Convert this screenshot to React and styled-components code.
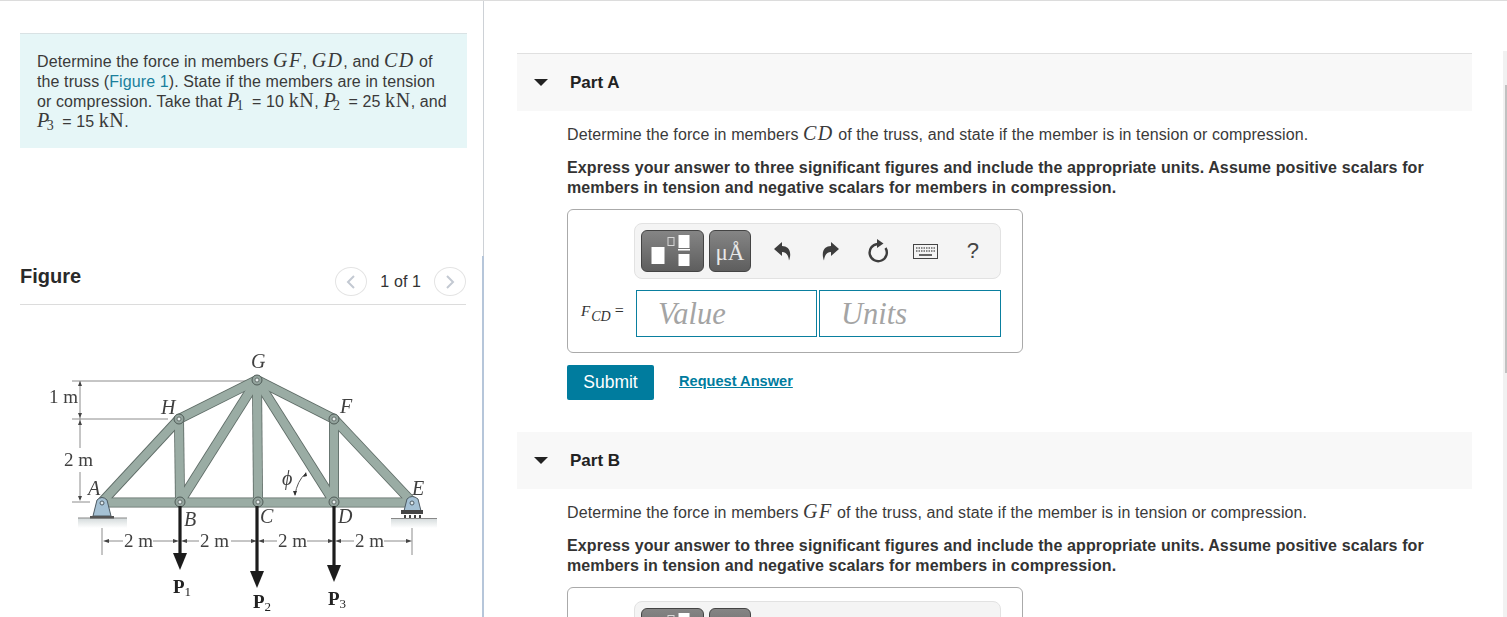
import React from "react";
import styled, { createGlobalStyle } from "styled-components";

const Global = createGlobalStyle`
  html, body { margin: 0; padding: 0; height: 100%; overflow: hidden; background: #fff; }
  body { font-family: "Liberation Sans", Arial, sans-serif; color: #333; }
  #root { height: 100%; }
`;

const Page = styled.div`
  display: flex;
  height: 617px;
  overflow: hidden;
  border-top: 1px solid #dcdcdc;
  box-sizing: border-box;
  position: relative;
`;
const LeftPanel = styled.aside`
  width: 484px;
  flex: none;
  box-sizing: border-box;
  padding: 32px 16px 0 20px;
  border-right: 1px solid #cdd1d6;
  overflow: hidden;
`;
const Intro = styled.div`
  background: #e6f6f7;
  border-top: 1px solid #d9e2e4;
  padding: 18px 17px 0;
  height: 115px;
  box-sizing: border-box;
  font-size: 16px;
  line-height: 20px;
  letter-spacing: 0.1px;
  color: #3a3a3a;
`;
const TextLink = styled.a`
  color: #1a7f9c;
`;
const MathVar = styled.span`
  font-family: "Liberation Serif", serif;
  font-style: italic;
  font-size: 20px;
  line-height: 0;
  letter-spacing: 1.4px;
`;
const MathRoman = styled.span`
  font-family: "Liberation Serif", serif;
  font-size: 20px;
  line-height: 0;
  letter-spacing: 0.6px;
`;
const MathSub = styled.sub`
  font-family: "Liberation Serif", serif;
  font-style: normal;
  font-size: 14px;
  line-height: 0;
  letter-spacing: 0;
  margin-left: -4px;
  margin-right: 4px;
  vertical-align: -3px;
`;
const FigureHead = styled.div`
  display: flex;
  align-items: center;
  justify-content: space-between;
  margin: 109px 1px 0 0;
  height: 48px;
  box-sizing: border-box;
  border-bottom: 1px solid #dcdcdc;
  padding-bottom: 8px;
`;
const FigureTitle = styled.h2`
  margin: 0;
  font-size: 20px;
  font-weight: bold;
  color: #2a2a2a;
`;
const Pager = styled.div`
  display: flex;
  align-items: center;
  gap: 13px;
  margin-top: 10px;
  font-size: 16px;
  letter-spacing: 0.1px;
  color: #333;
`;
const PagerBtn = styled.span`
  width: 32px;
  height: 29px;
  border: 1px solid #e4e4e4;
  border-radius: 50%;
  box-sizing: border-box;
  display: flex;
  align-items: center;
  justify-content: center;
`;
const TrussSvg = styled.svg`
  display: block;
  width: 447px;
  height: 277px;
  margin-top: 35px;
`;
const RightPanel = styled.main`
  flex: 1;
  box-sizing: border-box;
  padding: 52px 35px 0 33px;
  overflow: hidden;
`;
const PartHeader = styled.div`
  display: flex;
  align-items: center;
  height: ${(p) => (p.$first ? "58px" : "57px")};
  box-sizing: border-box;
  background: #f8f8f8;
  border-top: ${(p) => (p.$first ? "1px solid #e0e0e0" : "none")};
  padding-left: 17px;
`;
const Caret = styled.span`
  width: 0;
  height: 0;
  border-left: 7px solid transparent;
  border-right: 7px solid transparent;
  border-top: 7px solid #222;
  margin-right: 22px;
`;
const PartTitle = styled.h3`
  margin: 0;
  font-size: 17px;
  font-weight: bold;
  color: #222;
`;
const PartBody = styled.section`
  padding: 14px 0 32px 50px;
`;
const Prompt = styled.p`
  margin: 0;
  font-size: 16px;
  line-height: 20px;
  letter-spacing: 0.1px;
  color: #3a3a3a;
`;
const Instruction = styled.p`
  margin: 13px 0 0;
  font-size: 16px;
  line-height: 20px;
  font-weight: bold;
  color: #333;
  letter-spacing: 0.115px;
  max-width: 880px;
`;
const AnswerBox = styled.div`
  margin-top: 11px;
  width: 456px;
  height: 144px;
  box-sizing: border-box;
  border: 1px solid #aaa;
  border-radius: 6px;
  padding: 13px 21px 0 13px;
`;
const Toolbar = styled.div`
  margin-left: 53px;
  height: 56px;
  box-sizing: border-box;
  background: #f4f4f4;
  border: 1px solid #e2e2e2;
  border-radius: 8px;
  display: flex;
  align-items: center;
  padding-left: 6px;
`;
const ToolBtn = styled.button`
  width: ${(p) => p.$w}px;
  height: 42px;
  margin-right: 5px;
  padding: ${(p) => (p.$text ? "4px 0 0" : "0")};
  border: 1px solid #444;
  border-radius: 6px;
  background: linear-gradient(#858585, #5e5e5e);
  color: #e8e8e8;
  font-family: "Liberation Serif", serif;
  font-size: 23px;
  display: flex;
  align-items: center;
  justify-content: center;
  flex: none;
`;
const ToolIcons = styled.div`
  display: flex;
  align-items: center;
  flex: 1;
  padding-left: 3px;
`;
const ToolIcon = styled.span`
  width: 47.5px;
  display: flex;
  justify-content: center;
  align-items: center;
  flex: none;
  font-size: 22px;
  color: #444;
`;
const InputRow = styled.div`
  display: flex;
  align-items: center;
  margin-top: 11px;
`;
const VarLabel = styled.div`
  width: 55px;
  flex: none;
  font-family: "Liberation Serif", serif;
  font-size: 16px;
  color: #333;
  white-space: nowrap;
  position: relative;
  top: -3px;
`;
const LabelVar = styled.i`
  font-size: 15px;
`;
const LabelSub = styled.sub`
  font-style: italic;
  font-size: 14px;
  line-height: 0;
  vertical-align: -5px;
  margin-left: 1px;
  margin-right: 0;
`;
const FieldBox = styled.div`
  width: ${(p) => p.$w}px;
  height: 47px;
  box-sizing: border-box;
  border: 1px solid #0a7f9f;
  margin-right: 2px;
  padding-left: 21px;
  font-family: "Liberation Serif", serif;
  font-style: italic;
  font-size: 30.5px;
  line-height: 46px;
  color: #a4a4a4;
  flex: none;
`;
const Actions = styled.div`
  display: flex;
  align-items: center;
  margin-top: 12px;
`;
const SubmitBtn = styled.button`
  width: 87px;
  height: 35px;
  background: #007c9e;
  color: #fff;
  border: none;
  border-radius: 2px;
  font-family: "Liberation Sans", Arial, sans-serif;
  font-size: 17.5px;
  padding: 0;
`;
const RequestLink = styled.a`
  margin-left: 25px;
  font-size: 14.6px;
  font-weight: bold;
  color: #007c9e;
  text-decoration: underline;
  position: relative;
  top: -2px;
`;
const ScrollTrack = styled.div`
  position: absolute;
  top: 50px;
  right: 0;
  bottom: 0;
  width: 4px;
  background: #f1f1f1;
`;
const ScrollThumb = styled.div`
  position: absolute;
  top: 34px;
  right: 0;
  height: 288px;
  width: 2px;
  background: #c1c1c1;
`;
const PanelEdge = styled.div`
  position: absolute;
  left: 482px;
  top: 255px;
  bottom: 0;
  width: 2px;
  background: #b6c6da;
`;

const Undo = () => (
  <svg width="18" height="19" viewBox="0 0 18 19">
    <path d="M0 7 L8 0 V4 C14 4 18.5 9 15 18.5 C14.5 13 12 10 8 10 V14 Z" fill="#3d3d3d" />
  </svg>
);
const Redo = () => (
  <svg width="18" height="19" viewBox="0 0 18 19">
    <path d="M18 7 L10 0 V4 C4 4 -0.5 9 3 18.5 C3.5 13 6 10 10 10 V14 Z" fill="#3d3d3d" />
  </svg>
);
const Reset = () => (
  <svg width="22" height="24" viewBox="0 0 22 24">
    <path d="M10.5 5 A8.6 8.6 0 1 0 18.5 9" fill="none" stroke="#3d3d3d" strokeWidth="2.4" />
    <path d="M10 0 L16.5 4.5 L10 9 Z" fill="#3d3d3d" />
  </svg>
);
const Keyboard = () => (
  <svg width="25" height="15" viewBox="0 0 25 15">
    <rect x="0.5" y="0.5" width="24" height="14" fill="#f4f4f4" stroke="#444" />
    <path d="M3 4h19M3 7h19" stroke="#666" strokeWidth="1.6" strokeDasharray="1.5 1" fill="none" />
    <path d="M6 11h13" stroke="#666" strokeWidth="2" fill="none" />
  </svg>
);
const TemplateGlyph = () => (
  <svg width="46" height="34" viewBox="0 0 46 34">
    <rect x="1.5" y="13" width="13" height="17" fill="#fff" />
    <rect x="18" y="3.5" width="6" height="8" fill="none" stroke="#d8d8d8" />
    <rect x="28.5" y="1" width="11" height="13" fill="#fff" />
    <rect x="28" y="15" width="12" height="1.5" fill="#fff" />
    <rect x="28.5" y="20" width="11" height="12" fill="#fff" />
  </svg>
);
const ToolBar = () => (
  <Toolbar>
    <ToolBtn $w={63}><TemplateGlyph /></ToolBtn>
    <ToolBtn $w={42} $text>μÅ</ToolBtn>
    <ToolIcons>
      <ToolIcon><Undo /></ToolIcon>
      <ToolIcon><Redo /></ToolIcon>
      <ToolIcon><Reset /></ToolIcon>
      <ToolIcon><Keyboard /></ToolIcon>
      <ToolIcon>?</ToolIcon>
    </ToolIcons>
  </Toolbar>
);

const members = [
  [102, 502, 179, 419],
  [179, 419, 257, 380],
  [257, 380, 334, 419],
  [334, 419, 412, 502],
  [180, 502, 257, 380],
  [257, 380, 334, 502],
  [179, 419, 180, 502],
  [257, 380, 258, 502],
  [334, 419, 334, 502],
  [102, 502.5, 412, 502.5],
];
const joints = [
  [179, 419],
  [257, 380],
  [334, 419],
  [180, 502],
  [258, 502],
  [334, 502],
];
const labels = [
  ["H", 161, 414],
  ["A", 88, 495],
  ["B", 184, 526],
  ["G", 251, 368],
  ["F", 340, 413],
  ["E", 412, 495],
  ["C", 260, 523],
  ["D", 338, 523],
];
const dims = [
  [124, 547],
  [200, 547],
  [278, 547],
  [355, 547],
];
const dimLines = [
  [72, 381, 252, 381],
  [72, 419, 168, 419],
  [72, 502, 90, 502],
  [80, 381, 80, 410],
  [80, 410, 80, 448],
  [80, 472, 80, 499],
  [102, 512, 102, 555],
  [412, 525, 412, 555],
  [106, 541, 123, 541],
  [153, 541, 176, 541],
  [184, 541, 199, 541],
  [231, 541, 254, 541],
  [261, 541, 277, 541],
  [307, 541, 331, 541],
  [338, 541, 354, 541],
  [384, 541, 409, 541],
];
const loads = [
  [180, 570, "1", 173, 593],
  [257, 588, "2", 253, 608],
  [334, 582, "3", 328, 605],
];

const Truss = () => (
  <TrussSvg viewBox="20 340 447 277">
    <defs>
      <linearGradient id="ground" x1="0" y1="0" x2="0" y2="1">
        <stop offset="0" stopColor="#d3dadb" />
        <stop offset="1" stopColor="#ffffff" />
      </linearGradient>
      <filter id="soft"><feGaussianBlur stdDeviation="0.45" /></filter>
      <filter id="softText"><feGaussianBlur stdDeviation="0.25" /></filter>
    </defs>
    <g filter="url(#soft)">
      {dimLines.map(([a, b, c, d], i) => (
        <line key={i} x1={a} y1={b} x2={c} y2={d} stroke="#8c8c8c" strokeWidth="1" />
      ))}
      {members.map(([a, b, c, d], i) => (
        <line key={i} x1={a} y1={b} x2={c} y2={d} stroke="#5c6964" strokeWidth="10" />
      ))}
      {members.map(([a, b, c, d], i) => (
        <line key={i} x1={a} y1={b} x2={c} y2={d} stroke="#9aaca4" strokeWidth="8.4" />
      ))}
      {joints.map(([x, y], i) => (
        <g key={i}>
          <circle cx={x} cy={y} r="5" fill="#93a39d" stroke="#4f5b57" />
          <circle cx={x} cy={y} r="2" fill="#e8eeee" stroke="#55605c" strokeWidth="0.8" />
        </g>
      ))}
      <rect x="78" y="518" width="49" height="10" fill="url(#ground)" />
      <rect x="78" y="517.5" width="49" height="1" fill="#888" />
      <path d="M93 516 L97 500 Q102 495 107 500 L111 516 Z" fill="#a5c1d4" stroke="#4d5a62" />
      <circle cx="102" cy="503" r="2" fill="#dfe8ec" stroke="#4d5a62" />
      <rect x="90" y="516" width="24" height="2.5" fill="#555" />
      <rect x="391" y="518" width="46" height="10" fill="url(#ground)" />
      <rect x="391" y="518" width="46" height="1" fill="#888" />
      <path d="M404 511 L407 499 Q412 494 418 499 L421 511 Z" fill="#a5c1d4" stroke="#4d5a62" />
      <circle cx="412" cy="503" r="2" fill="#dfe8ec" stroke="#4d5a62" />
      <rect x="401" y="510" width="22" height="4" fill="#444" />
      <path d="M404 515h2v3h-2zM409 515h2v3h-2zM414 515h2v3h-2zM419 515h2v3h-2z" fill="#444" />
      <path d="M295 495 Q297 481 306 473" fill="none" stroke="#555" />
      <path d="M306 472 L303 477 L307 476 Z M295 496 L293 491 L297 491 Z" fill="#333" />
      {[[106, 541, 1], [176, 541, -1], [184, 541, 1], [254, 541, -1], [261, 541, 1], [331, 541, -1], [338, 541, 1], [409, 541, -1]].map(
        ([x, y, s], i) => (
          <path key={i} d={`M${x - 3 * s} ${y} L${x + 3 * s} ${y - 2} L${x + 3 * s} ${y + 2} Z`} fill="#444" />
        )
      )}
      <path d="M80 381 l-2 5 h4 Z M80 418 l-2 -5 h4 Z M80 420 l-2 5 h4 Z M80 501 l-2 -5 h4 Z" fill="#444" />
      {loads.map(([x, tip], i) => (
        <g key={i}>
          <line x1={x} y1="506" x2={x} y2={tip - 14} stroke="#1c1c1c" strokeWidth="3.2" />
          <path d={`M${x - 7} ${tip - 17} L${x + 7} ${tip - 17} L${x} ${tip} Z`} fill="#1c1c1c" />
        </g>
      ))}
    </g>
    <g fontFamily="Liberation Serif, serif" fill="#3f3f3f" filter="url(#softText)">
      <text x="49" y="403" fontSize="19">1 m</text>
      <text x="64" y="466" fontSize="19">2 m</text>
      {dims.map(([x, y], i) => (
        <text key={i} x={x} y={y} fontSize="19">2 m</text>
      ))}
      {labels.map(([t, x, y]) => (
        <text key={t} x={x} y={y} fontSize="20" fontStyle="italic">{t}</text>
      ))}
      <text x="282" y="485" fontSize="20" fontStyle="italic">ϕ</text>
      {loads.map(([, , n, x, y]) => (
        <text key={n} x={x} y={y} fontSize="19" fontWeight="bold" fill="#222">
          P<tspan fontSize="13" fontWeight="normal" dy="3">{n}</tspan>
        </text>
      ))}
    </g>
  </TrussSvg>
);

const Part = ({ title, member, first, fieldSub }) => (
  <>
    <PartHeader $first={first}>
      <Caret />
      <PartTitle>{title}</PartTitle>
    </PartHeader>
    <PartBody>
      <Prompt>
        Determine the force in members <MathVar>{member}</MathVar> of the truss, and state if the member is in tension or compression.
      </Prompt>
      <Instruction>
        Express your answer to three significant figures and include the appropriate units. Assume positive scalars for members in tension and negative scalars for members in compression.
      </Instruction>
      <AnswerBox>
        <ToolBar />
        <InputRow>
          <VarLabel>
            <LabelVar>F</LabelVar>
            <LabelSub>{fieldSub}</LabelSub> =
          </VarLabel>
          <FieldBox $w={181}>Value</FieldBox>
          <FieldBox $w={182}>Units</FieldBox>
        </InputRow>
      </AnswerBox>
      <Actions>
        <SubmitBtn>Submit</SubmitBtn>
        <RequestLink>Request Answer</RequestLink>
      </Actions>
    </PartBody>
  </>
);

export default function App() {
  return (
    <>
      <Global />
      <Page>
        <LeftPanel>
          <Intro>
            Determine the force in members <MathVar>GF</MathVar>, <MathVar>GD</MathVar>, and <MathVar>CD</MathVar> of the truss (<TextLink>Figure 1</TextLink>). State if the members are in tension or compression. Take that{" "}
            <MathVar>P<MathSub>1</MathSub></MathVar> = 10 <MathRoman>kN</MathRoman>, <MathVar>P<MathSub>2</MathSub></MathVar> = 25 <MathRoman>kN</MathRoman>, and{" "}
            <br />
            <MathVar>P<MathSub>3</MathSub></MathVar> = 15 <MathRoman>kN</MathRoman>.
          </Intro>
          <FigureHead>
            <FigureTitle>Figure</FigureTitle>
            <Pager>
              <PagerBtn>
                <svg width="10" height="14" viewBox="0 0 10 14"><path d="M8 1 L2 7 L8 13" fill="none" stroke="#c3c9d2" strokeWidth="2" /></svg>
              </PagerBtn>
              <span>1 of 1</span>
              <PagerBtn>
                <svg width="10" height="14" viewBox="0 0 10 14"><path d="M2 1 L8 7 L2 13" fill="none" stroke="#c3c9d2" strokeWidth="2" /></svg>
              </PagerBtn>
            </Pager>
          </FigureHead>
          <Truss />
        </LeftPanel>
        <RightPanel>
          <Part first title="Part A" member="CD" fieldSub="CD" />
          <Part title="Part B" member="GF" fieldSub="GF" />
        </RightPanel>
        <PanelEdge />
        <ScrollTrack>
          <ScrollThumb />
        </ScrollTrack>
      </Page>
    </>
  );
}
